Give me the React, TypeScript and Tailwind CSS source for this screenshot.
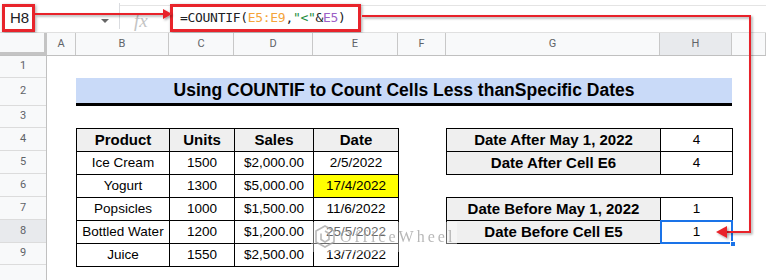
import React from 'react';

const columns = [
  { label: 'A', w: 'w-[29px]', bg: 'bg-[#f8f9fa]' },
  { label: 'B', w: 'w-[93px]', bg: 'bg-[#f8f9fa]' },
  { label: 'C', w: 'w-[65px]', bg: 'bg-[#f8f9fa]' },
  { label: 'D', w: 'w-[79px]', bg: 'bg-[#f8f9fa]' },
  { label: 'E', w: 'w-[85px]', bg: 'bg-[#f8f9fa]' },
  { label: 'F', w: 'w-[48px]', bg: 'bg-[#f8f9fa]' },
  { label: 'G', w: 'w-[214px]', bg: 'bg-[#f8f9fa]' },
  { label: 'H', w: 'w-[72px]', bg: 'bg-[#e8eaed]' },
  { label: '', w: 'flex-1', bg: 'bg-[#f8f9fa]' },
];

const rowHeads = [
  { n: '1', h: 'h-[22px]', bg: 'bg-[#f8f9fa]' },
  { n: '2', h: 'h-[28px]', bg: 'bg-[#f8f9fa]' },
  { n: '3', h: 'h-[22px]', bg: 'bg-[#f8f9fa]' },
  { n: '4', h: 'h-[23px]', bg: 'bg-[#f8f9fa]' },
  { n: '5', h: 'h-[23px]', bg: 'bg-[#f8f9fa]' },
  { n: '6', h: 'h-[23px]', bg: 'bg-[#f8f9fa]' },
  { n: '7', h: 'h-[23px]', bg: 'bg-[#f8f9fa]' },
  { n: '8', h: 'h-[23px]', bg: 'bg-[#e8eaed]' },
  { n: '9', h: 'h-[22px]', bg: 'bg-[#f8f9fa]' },
  { n: '', h: 'h-[30px]', bg: 'bg-[#f8f9fa]' },
];

const products = [
  ['Ice Cream', '1500', '$2,000.00', '2/5/2022'],
  ['Yogurt', '1300', '$5,000.00', '17/4/2022'],
  ['Popsicles', '1000', '$1,500.00', '11/6/2022'],
  ['Bottled Water', '1200', '$1,200.00', '25/5/2022'],
  ['Juice', '1550', '$2,500.00', '13/7/2022'],
];

const cell = 'h-[23px] flex items-center justify-center border-r border-b border-black whitespace-nowrap';

function FormulaText() {
  return (
    <span className="font-['DejaVu_Sans_Mono',monospace] text-[13px] text-[#202124] tracking-[-0.3px]">
      =COUNTIF(<span className="text-[#f4a43a]">E5:E9</span>,<span className="text-[#1e8e3e]">"&lt;"</span>&amp;<span className="text-[#9c5fc6]">E5</span>)
    </span>
  );
}

function Arrows() {
  return (
    <svg className="absolute inset-0 pointer-events-none" width="766" height="280" viewBox="0 0 766 280">
      <defs>
        <filter id="sh" x="-10%" y="-10%" width="120%" height="120%">
          <feDropShadow dx="1.5" dy="1.5" stdDeviation="1.2" floodColor="#000" floodOpacity="0.35" />
        </filter>
      </defs>
      <g filter="url(#sh)" stroke="#e8242b" strokeWidth="2" fill="none">
        <line x1="35" y1="14" x2="164" y2="14" />
        <polyline points="362,16 750,16 750,232 726,232" />
      </g>
      <g filter="url(#sh)" fill="#e8242b">
        <polygon points="163,9 172,14 163,19" />
        <polygon points="727,226 716,232 727,238" />
      </g>
    </svg>
  );
}

function Watermark() {
  return (
    <div className="absolute left-[311px] top-[222px] flex items-center gap-[3px] bg-white/40 px-[2px] h-[30px] pointer-events-none">
      <svg width="24" height="26" viewBox="0 0 24 26">
        <g fill="none" stroke="#a8a8a8" strokeWidth="1.6" opacity="0.8">
          <polygon points="12,2 21,7 21,18 12,23 3,18 3,7" />
          <polyline points="12,7 16,9.5 16,15.5 12,18 8,15.5 8,9.5" />
        </g>
      </svg>
      <span className="font-['Liberation_Serif',serif] text-[16px] tracking-[3px] text-[#9a9a9a] opacity-70">OfficeWheel</span>
    </div>
  );
}

export default function App() {
  return (
    <div className="relative w-[766px] h-[280px] overflow-hidden bg-white font-['Liberation_Sans',Arial,sans-serif] text-black">
      {/* formula bar */}
      <div className="flex h-[33px] border-b border-[#e0e0e0]">
        <div className="w-[120px] flex items-start pt-[4px] pl-[2px] border-r border-[#dadce0] mt-[3px] mb-[3px]">
          <div className="-mt-[3px] h-[28px] w-[33px] border-[3px] border-[#e8242b] flex items-center pl-[5px] text-[15px] text-[#202124] shadow-[1px_1px_3px_rgba(0,0,0,0.35)]">
            H8
          </div>
          <div className="ml-auto mr-[10px] mt-[12px] w-0 h-0 border-l-[4px] border-r-[4px] border-t-[4px] border-l-transparent border-r-transparent border-t-[#666]" />
        </div>
        <div className="flex-1 flex items-start border-t border-[#e4e4e4] mt-[5px]">
          <div className="w-[50px] pt-[1px] pl-[14px] font-['Liberation_Serif',serif] italic text-[19px] text-[#c4c4c4]">fx</div>
          <div className="-mt-[2px] h-[28px] w-[191px] border-[3px] border-[#e8242b] flex items-center pl-[7px] shadow-[1px_1px_3px_rgba(0,0,0,0.35)] bg-white">
            <FormulaText />
          </div>
        </div>
      </div>

      {/* column headers */}
      <div className="flex h-[23px] border-b border-[#c0c0c0] font-['Roboto',sans-serif] text-[11px] text-[#5f6368]">
        <div className="w-[47px] bg-[#f8f9fa] border-r-[3px] border-b-[3px] border-[#c4c4c4]" />
        {columns.map((c, i) => (
          <div key={i} className={`${c.w} ${c.bg} border-r border-[#c8c8c8] flex items-center justify-center`}>
            {c.label}
          </div>
        ))}
      </div>

      <div className="flex">
        {/* row headers */}
        <div className="w-[47px] flex flex-col border-r border-[#c0c0c0] font-['Roboto',sans-serif] text-[11px] text-[#5f6368]">
          {rowHeads.map((r, i) => (
            <div key={i} className={`${r.h} ${r.bg} border-b border-[#dcdcdc] flex items-center justify-center`}>
              {r.n}
            </div>
          ))}
        </div>

        {/* sheet body */}
        <div className="flex-1 flex flex-col pl-[29px]">
          <div className="h-[22px]" />
          <div className="h-[28px] w-[656px] bg-[#c9daf8] border-b-[3px] border-black flex items-center justify-center text-[17.5px] font-bold">
            Using COUNTIF to Count Cells Less thanSpecific Dates
          </div>
          <div className="h-[22px]" />

          <div className="flex gap-[47px]">
            <div className="grid grid-cols-[93px_65px_79px_85px] border-l border-t border-black w-[323px]">
              {['Product', 'Units', 'Sales', 'Date'].map((h) => (
                <div key={h} className={`${cell} bg-[#efefef] text-[15px] font-bold`}>{h}</div>
              ))}
              {products.map((row, i) =>
                row.map((v, j) => (
                  <div
                    key={`${i}-${j}`}
                    className={`${cell} text-[13.5px] ${i === 1 && j === 3 ? 'bg-[#ffff00]' : ''}`}
                  >
                    {v}
                  </div>
                ))
              )}
            </div>

            <div className="flex flex-col">
              <div className="grid grid-cols-[214px_72px] border-l border-t border-black w-[287px]">
                <div className={`${cell} bg-[#efefef] text-[15px] font-bold`}>Date After May 1, 2022</div>
                <div className={`${cell} text-[13.5px]`}>4</div>
                <div className={`${cell} bg-[#efefef] text-[15px] font-bold`}>Date After Cell E6</div>
                <div className={`${cell} text-[13.5px]`}>4</div>
              </div>
              <div className="h-[22px]" />
              <div className="grid grid-cols-[214px_72px] border-l border-t border-black w-[287px]">
                <div className={`${cell} bg-[#efefef] text-[15px] font-bold`}>Date Before May 1, 2022</div>
                <div className={`${cell} text-[13.5px]`}>1</div>
                <div className={`${cell} bg-[#efefef] text-[15px] font-bold`}>Date Before Cell E5</div>
                <div className={`${cell} text-[13.5px] relative`}>
                  1
                  <div className="absolute -left-[1px] -top-[1px] right-[-1px] bottom-[-1px] border-2 border-[#1a73e8]" />
                  <div className="absolute right-[-4px] bottom-[-4px] w-[6px] h-[6px] bg-[#1a73e8] border border-white" />
                </div>
              </div>
            </div>
          </div>
        </div>
      </div>

      <Watermark />
      <Arrows />
    </div>
  );
}
